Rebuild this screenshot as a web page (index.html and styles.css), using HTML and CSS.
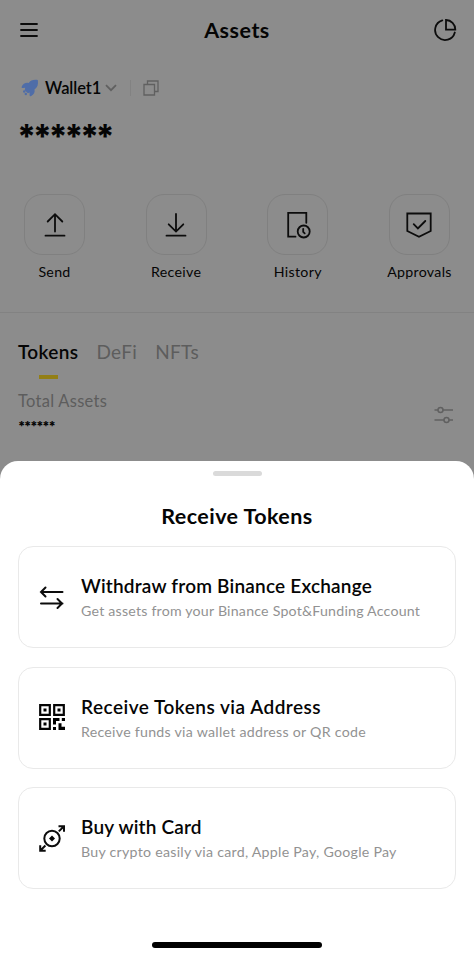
FILE: index.html
```html
<!DOCTYPE html>
<html lang="en">
<head>
<meta charset="utf-8">
<meta name="viewport" content="width=device-width, initial-scale=1">
<title>Assets</title>
<link rel="stylesheet" href="styles.css">
</head>
<body>
<div class="screen">
  <main class="assets">
    <header class="topbar">
      <svg class="icon" width="18" height="16" viewBox="0 0 18 16"><path d="M1 2h16M1 8h16M1 14h16"/></svg>
      <h1 class="topbar-title">Assets</h1>
      <svg class="icon" width="24" height="24" viewBox="0 0 24 24"><path d="M9.3 2.4A10 10 0 1 0 21.8 14.5M13 2a9.6 9.6 0 0 1 9.3 9.6H13z"/></svg>
    </header>
    <div class="wallet">
      <svg class="rocket" width="18" height="18" viewBox="0 0 18 18"><path d="M16.800.9C12.500.3 9.500 1.200 7.700 3.900 5.200 3 1.800 4.500.7 7.700c-.3 1 .3 1.500 1.200 1.300l2.300-.3-.5 2.500 3.200 3 1.800-.7-.2 2.400c.2 1.300 1.100 1.600 2.100.9 2.500-1.600 3.500-3.800 2.900-6.200C16.500 8.400 17.500 5.200 16.800.9z"/><circle cx="3.200" cy="12.500" r="1.200"/><circle cx="4.800" cy="15" r="1.200"/></svg>
      <span class="wallet-name">Wallet1</span>
      <svg class="muted chevron" width="12" height="8" viewBox="0 0 12 8"><path d="M1 1.200l5 5 5-5"/></svg>
      <span class="separator"></span>
      <svg class="muted copy" width="16" height="16" viewBox="0 0 16 16"><path d="M1 4.500h10.500V15H1zM4.500 4.500V1H15v10.500h-3.500"/></svg>
    </div>
    <div class="balance">******</div>
    <nav class="actions">
      <div class="action"><span class="tile"><svg class="icon" width="30" height="30" viewBox="0 0 30 30"><path d="M15 21.500V4.500M7.700 11.500L15 4.200l7.300 7.300M5.500 25.700h19"/></svg></span><span class="action-label">Send</span></div>
      <div class="action"><span class="tile"><svg class="icon" width="30" height="30" viewBox="0 0 30 30"><path d="M15 4v17.300M7.700 14.300l7.300 7.300 7.300-7.300M5.500 25.700h19"/></svg></span><span class="action-label">Receive</span></div>
      <div class="action"><span class="tile"><svg class="icon" width="30" height="30" viewBox="0 0 30 30"><path d="M12.500 26.700H5.200V2.800h18.100v10.000"/><circle cx="20.700" cy="21.500" r="6"/><path d="M20.200 18.800v3l1.500 1.500"/></svg></span><span class="action-label">History</span></div>
      <div class="action"><span class="tile"><svg class="icon" width="30" height="30" viewBox="0 0 30 30"><path d="M3.300 3.500h23.400V21L15 26.700 3.300 21zM9.700 14.200l4.200 4.300 7.400-7.500"/></svg></span><span class="action-label">Approvals</span></div>
    </nav>
    <section class="holdings">
      <div class="tabs">
        <span class="tab tab-active">Tokens</span>
        <span class="tab tab-defi">DeFi</span>
        <span class="tab tab-nfts">NFTs</span>
      </div>
      <div class="summary">
        <div>
          <div class="total-label">Total Assets</div>
          <div class="total-value">******</div>
        </div>
        <svg class="muted filter" width="20" height="18" viewBox="0 0 20 18"><path d="M.5 4H4M9 4h10M.5 14H10M15 14h4"/><circle cx="6.500" cy="4" r="2.500"/><circle cx="12.500" cy="14" r="2.500"/></svg>
      </div>
    </section>
  </main>
  <section class="sheet">
    <div class="grabber"></div>
    <h2 class="sheet-title">Receive Tokens</h2>
    <div class="options">
      <div class="option">
        <svg class="icon option-icon" width="28" height="28" viewBox="0 0 28 28"><path d="M24.500 9H3M7.500 4.500L3 9l4.500 4.500M3 20.500h21.500M19.500 16l4.500 4.500-4.500 4.500"/></svg>
        <div class="option-text"><h3 class="option-name name-withdraw">Withdraw from Binance Exchange</h3><p class="option-note note-withdraw">Get assets from your Binance Spot&amp;Funding Account</p></div>
      </div>
      <div class="option">
        <svg class="option-icon" width="28" height="28" viewBox="0 0 28 28"><path class="line" d="M2.200 2.200h9.600v9.600H2.200zM16.200 2.200h9.600v9.600h-9.600zM2.200 16.200h9.600v9.600H2.200z"/><path d="M5.500 5.500h3v3h-3zM19.500 5.500h3v3h-3zM5.500 19.500h3v3h-3zM15 15h6.500v3H18v3.500h-3zM23.800 15H27v3h-3.200zM15 24h3v3h-3zM20.500 20.200h3v3.600H27V27h-6.500z"/></svg>
        <div class="option-text"><h3 class="option-name name-address">Receive Tokens via Address</h3><p class="option-note note-address">Receive funds via wallet address or QR code</p></div>
      </div>
      <div class="option">
        <svg class="icon option-icon sharp" width="28" height="28" viewBox="0 0 28 28"><circle cx="14" cy="14.500" r="7.700"/><path d="M20.500 2.200H26v5.500M26 2.200l-5.200 5.200M2.200 21.200v5.500h5.500M2.200 26.700l5.200-5.200"/><path class="solid" d="M14 11.500l3 3-3 3-3-3z"/></svg>
        <div class="option-text"><h3 class="option-name name-card">Buy with Card</h3><p class="option-note note-card">Buy crypto easily via card, Apple Pay, Google Pay</p></div>
      </div>
    </div>
    <div class="home-bar"></div>
  </section>
</div>
</body>
</html>
```
FILE: styles.css
```css
* { box-sizing: border-box; }
body { margin: 0; font-family: Lato, "Noto Sans", sans-serif; color: #050505; background: #8c8c8c; }
h1, h2, h3, p { margin: 0; }
svg { display: block; flex: none; }
.screen { width: 474px; height: 958px; display: flex; flex-direction: column; overflow: hidden; }
.assets { height: 461px; flex: none; }
.icon { fill: none; stroke: #0c0c0c; stroke-width: 1.8; stroke-linecap: round; }
.muted { fill: none; stroke: #606060; stroke-width: 1.3; }

.topbar { height: 60px; padding: 0 17px 0 20px; display: flex; align-items: center; justify-content: space-between; }
.topbar-title { font-size: 21.500px; line-height: 30px; font-weight: 700; letter-spacing: .5px; margin: -1px 0 0 3px; }
.wallet { height: 24px; margin-top: 16px; padding-left: 21px; display: flex; align-items: center; }
.rocket { fill: #4f6da8; }
.wallet-name { margin-left: 6px; width: 55px; font-size: 16.500px; font-weight: 600; letter-spacing: -.1px; line-height: 20px; margin-top: -1px; white-space: nowrap; }
.chevron { margin-left: 5px; stroke-width: 1.800; }
.separator { width: 1px; height: 16px; margin: 0 12px 0 13px; background: #828282; }
.balance { height: 30px; margin: 19px 0 0 17px; font: 800 33px/34px Inter, sans-serif; letter-spacing: -3.500px; }

.actions { margin-top: 45px; padding: 0 24px; display: flex; justify-content: space-between; }
.action { width: 61px; display: flex; flex-direction: column; align-items: center; }
.tile { width: 61px; height: 61px; border: 1px solid #808080; border-radius: 18px; display: grid; place-items: center; }
.action-label { margin-top: 7px; font-size: 14.200px; line-height: 20px; letter-spacing: .3px; white-space: nowrap; }

.holdings { margin-top: 30px; border-top: 1px solid #828282; padding: 26px 20px 0 18px; }
.tabs { height: 40px; display: flex; gap: 18px; font-size: 19px; line-height: 26px; letter-spacing: .35px; color: #5d5d5d; }
.tab-active { color: #050505; font-weight: 600; display: flex; flex-direction: column; align-items: center; }
.tab-active::after { content: ""; width: 19px; height: 4px; margin-top: 10px; background: #937f15; }
.summary { display: flex; justify-content: space-between; margin-top: 10px; }
.total-label { font-size: 16.500px; line-height: 24px; letter-spacing: .28px; color: #5d5d5d; }
.total-value { font: 800 12.500px/27px Inter, sans-serif; letter-spacing: -1.200px; }
.filter { margin-top: 17px; stroke-width: 1.500; }

.sheet { height: 497px; flex: none; display: flex; flex-direction: column; align-items: center; background: #fff; border-radius: 18px 18px 0 0; }
.grabber { width: 49px; height: 5px; margin-top: 10px; border-radius: 3px; background: #dadada; }
.sheet-title { margin-top: 25px; font-size: 21.500px; line-height: 30px; font-weight: 700; letter-spacing: .42px; white-space: nowrap; }
.options { width: 438px; margin-top: 15px; display: flex; flex-direction: column; gap: 18.500px; }
.option { height: 102px; padding-left: 19px; border: 1px solid #e9e9e9; border-radius: 15px; display: flex; align-items: center; }
.option-icon { stroke-width: 2; margin-top: -1px; }
.option-text { margin: 1px 0 0 15px; white-space: nowrap; }
.option-name { font-size: 19px; line-height: 26px; font-weight: 600; }
.option-note { margin-top: 1px; font-size: 14.200px; line-height: 22px; color: #929292; }
.name-withdraw { letter-spacing: .2px; }
.name-address { letter-spacing: .48px; }
.name-card { letter-spacing: .18px; }
.note-withdraw { letter-spacing: .21px; }
.note-address, .note-card { letter-spacing: .26px; }
.sharp { stroke-linecap: butt; }
.line { fill: none; stroke: #050505; stroke-width: 2.200; }
.solid { fill: #050505; stroke: none; }
.home-bar { width: 170px; height: 6px; margin-top: 53px; border-radius: 3px; background: #000; }
```
